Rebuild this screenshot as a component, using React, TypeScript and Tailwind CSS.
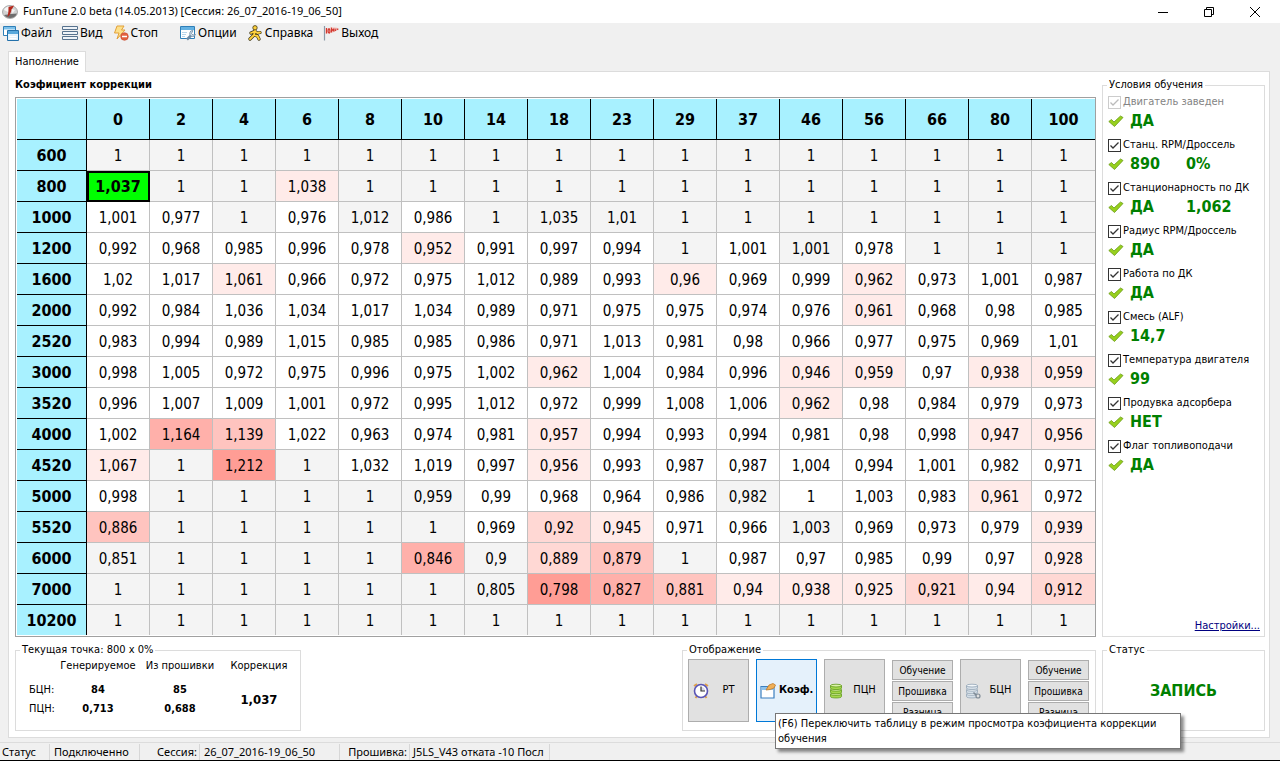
import { useState } from "react";
import type { ReactNode } from "react";

const throttle = ["0", "2", "4", "6", "8", "10", "14", "18", "23", "29", "37", "46", "56", "66", "80", "100"];

// rpm, values by throttle column, shade of every cell
const rows: [string, string, string][] = [
  ["600", "1 1 1 1 1 1 1 1 1 1 1 1 1 1 1 1", "gggggggggggggggg"],
  ["800", "1,037 1 1 1,038 1 1 1 1 1 1 1 1 1 1 1 1", "sggagggggggggggg"],
  ["1000", "1,001 0,977 1 0,976 1,012 0,986 1 1,035 1,01 1 1 1 1 1 1 1", "..g.g.gggggggggg"],
  ["1200", "0,992 0,968 0,985 0,996 0,978 0,952 0,991 0,997 0,994 1 1,001 1,001 0,978 1 1 1", ".....a...g.g.ggg"],
  ["1600", "1,02 1,017 1,061 0,966 0,972 0,975 1,012 0,989 0,993 0,96 0,969 0,999 0,962 0,973 1,001 0,987", "..a......a..a..."],
  ["2000", "0,992 0,984 1,036 1,034 1,017 1,034 0,989 0,971 0,975 0,975 0,974 0,976 0,961 0,968 0,98 0,985", "............a..."],
  ["2520", "0,983 0,994 0,989 1,015 0,985 0,985 0,986 0,971 1,013 0,981 0,98 0,966 0,977 0,975 0,969 1,01", "................"],
  ["3000", "0,998 1,005 0,972 0,975 0,996 0,975 1,002 0,962 1,004 0,984 0,996 0,946 0,959 0,97 0,938 0,959", ".......a...aa.aa"],
  ["3520", "0,996 1,007 1,009 1,001 0,972 0,995 1,012 0,972 0,999 1,008 1,006 0,962 0,98 0,984 0,979 0,973", "...........a...."],
  ["4000", "1,002 1,164 1,139 1,022 0,963 0,974 0,981 0,957 0,994 0,993 0,994 0,981 0,98 0,998 0,947 0,956", ".dc....a......aa"],
  ["4520", "1,067 1 1,212 1 1,032 1,019 0,997 0,956 0,993 0,987 0,987 1,004 0,994 1,001 0,982 0,971", "ageg...a........"],
  ["5000", "0,998 1 1 1 1 0,959 0,99 0,968 0,964 0,986 0,982 1 1,003 0,983 0,961 0,972", ".ggggg....g...a."],
  ["5520", "0,886 1 1 1 1 1 0,969 0,92 0,945 0,971 0,966 1,003 0,969 0,973 0,979 0,939", "cggggg.ba..g...a"],
  ["6000", "0,851 1 1 1 1 0,846 0,9 0,889 0,879 1 0,987 0,97 0,985 0,99 0,97 0,928", "gggggdgbcg.....a"],
  ["7000", "1 1 1 1 1 1 0,805 0,798 0,827 0,881 0,94 0,938 0,925 0,921 0,94 0,912", "gggggggedcaaabab"],
  ["10200", "1 1 1 1 1 1 1 1 1 1 1 1 1 1 1 1", "gggggggggggggggg"],
];

const shades: Record<string, string> = {
  ".": "bg-white",
  g: "bg-[#f4f4f4]",
  a: "bg-[#ffebe9]",
  b: "bg-[#ffd8d4]",
  c: "bg-[#ffc4bf]",
  d: "bg-[#ffb0aa]",
  e: "bg-[#ff9d95]",
  s: "bg-[#00ff00] text-base leading-5 font-bold outline-2 -outline-offset-2 outline-black",
};

const conditions = [
  { label: "Двигатель заведен", value: "ДА", disabled: true },
  { label: "Станц. RPM/Дроссель", value: "890", extra: "0%" },
  { label: "Станционарность по ДК", value: "ДА", extra: "1,062" },
  { label: "Радиус RPM/Дроссель", value: "ДА" },
  { label: "Работа по ДК", value: "ДА" },
  { label: "Смесь (ALF)", value: "14,7" },
  { label: "Температура двигателя", value: "99" },
  { label: "Продувка адсорбера", value: "НЕТ" },
  { label: "Флаг топливоподачи", value: "ДА" },
];

function Icon({ children }: { children: ReactNode }) {
  return (
    <svg viewBox="0 0 16 16" className="size-4 shrink-0" fill="none" aria-hidden="true">
      {children}
    </svg>
  );
}

function WindowsIcon() {
  return (
    <Icon>
      <path d="M.5 1.500h12v9H.5z" fill="#fff" stroke="#2e7fb8" />
      <path d="M1 2h11v2.500H1z" fill="#7cc0ea" />
      <path d="M4.500 5.500h11v10h-11z" fill="#e4f2fb" stroke="#2471ab" />
      <path d="M5 6h10v3H5z" fill="#58a9dc" />
      <path d="M6.500 11.500h7M6.500 13.500h7" stroke="#fff" />
    </Icon>
  );
}

function RowsIcon() {
  return (
    <Icon>
      <path d="M.5 1.500h15v3H.5zM.5 6.500h15v3H.5zM.5 11.500h15v3H.5z" fill="#eef3f8" stroke="#57728e" />
    </Icon>
  );
}

function StopIcon() {
  return (
    <Icon>
      <path d="M4 1h7L8.500 5H12L4 14l2-6H1.500z" fill="#fde08a" stroke="#e2a13a" />
      <circle cx="11.500" cy="11.500" r="3.800" fill="#e2613f" stroke="#c8472b" strokeWidth=".6" />
      <path d="M9 11.500h5" stroke="#fff" strokeWidth="1.500" />
    </Icon>
  );
}

function OptionsIcon() {
  return (
    <Icon>
      <path d="M.5 1.500h14v12H.5z" fill="#fff" stroke="#2e7fb8" />
      <path d="M1 2h13v3H1z" fill="#63b1e2" />
      <path d="M2 7.500h5M2 9.500h4M2 11.500h3" stroke="#b7d5ea" />
      <path d="M7 14.500l4.500-4.500" stroke="#6d8ba5" strokeWidth="2.500" />
      <path d="M13 5.500a3 3 0 1 0 2.500 4l-2.500.5-1.500-1.500z" fill="#cfdde8" stroke="#6d8ba5" strokeWidth=".8" />
    </Icon>
  );
}

function RunnerIcon() {
  return (
    <Icon>
      <g stroke="#3d3410" strokeLinecap="round" strokeLinejoin="round" strokeWidth="3.200">
        <path d="M8 6l-1 4 3.500 1 1.500 3M6.500 10.500L3 14M7.500 6.500L4 8M8 6.500l2.500 1.500 2.500-.5" />
      </g>
      <circle cx="8" cy="2.800" r="2.200" fill="#ffd23c" stroke="#3d3410" strokeWidth=".8" />
      <g stroke="#ffd23c" strokeLinecap="round" strokeLinejoin="round" strokeWidth="1.900">
        <path d="M8 6l-1 4 3.500 1 1.500 3M6.500 10.500L3 14M7.500 6.500L4 8M8 6.500l2.500 1.500 2.500-.5" />
      </g>
    </Icon>
  );
}

function ExitIcon() {
  return (
    <Icon>
      <path d="M1.500 1v14.500" stroke="#8b9aa8" strokeWidth="1.200" />
      <path d="M2 3.500c2-1.500 3 .5 5-.5s4-1.500 8 0c-1 3-3 4-5 4.500S4 9 2 8.500z" fill="#f3d5d2" />
      <path d="M3.500 3v5.500M6 3.500c-1.500 1.500-1 4 0 4.500s1.500-3 0-4.500M8.500 7.500V3.500l1.500 2 1-2v3M13 3.500l-.5 2.500M15 3.500L14.500 5" stroke="#d3382f" strokeWidth="1.200" />
    </Icon>
  );
}

function AppIcon() {
  return (
    <Icon>
      <ellipse cx="8" cy="8" rx="7.500" ry="6.500" fill="#d2d2d2" stroke="#9a9a9a" strokeWidth=".8" />
      <path d="M2 11c3 4.500 11 4 13-1.500L9 10z" fill="#6e6e6e" />
      <path d="M2 6a6 6 0 0 1 5-3.500L6 8z" fill="#f6f6f6" />
      <path d="M6.500 3L12 1.500 9.500 6 8 10.500 5.500 13 6.500 7z" fill="#b5281c" />
      <path d="M9.500 5l3.500 1-2.500 3.500z" fill="#f4f4f4" />
    </Icon>
  );
}

function ClockIcon() {
  return (
    <Icon>
      <path d="M1 3l3-2M15 3l-3-2M2.500 15L4 13M13.500 15L12 13" stroke="#e0a04a" strokeWidth="2" />
      <circle cx="8" cy="8" r="6.500" fill="#fff" stroke="#5a55b5" strokeWidth="1.600" />
      <path d="M8 4a4 4 0 0 1 4 4H8z" fill="#d8d8e8" />
      <path d="M8 3.500V8h4" stroke="#333" strokeWidth="1.200" />
    </Icon>
  );
}

function CardIcon() {
  return (
    <Icon>
      <path d="M1 3.500h13v11.500H1z" fill="#fff" stroke="#3a7fc0" strokeWidth="1.200" />
      <path d="M1.500 4h12v3h-12z" fill="#8cc3ee" />
      <path d="M6 7l3-5 4-1.500L15.500 2 14 5l-4 1.500z" fill="#f0b057" stroke="#c07a2a" strokeWidth=".8" />
    </Icon>
  );
}

function DatabaseIcon({ muted = false }: { muted?: boolean }) {
  const fill = muted ? "#d5dfe8" : "#a5d84b";
  const line = muted ? "#93a4b5" : "#5f9a1a";
  const light = muted ? "#f3f7fa" : "#dcf2a8";
  return (
    <Icon>
      {[10, 5.8, 1.6].map((y) => (
        <g key={y} stroke={line} strokeWidth=".8">
          <path d={`M1.500 ${y + 1}v2.600c0 1.800 11 1.800 11 0v-2.600z`} fill={fill} />
          <ellipse cx="7" cy={y + 1} rx="5.500" ry="1.400" fill={light} />
        </g>
      ))}
      {muted && (
        <>
          <path d="M8.500 9.500l4 4" stroke="#7f8b96" strokeWidth="1.600" />
          <circle cx="13" cy="13" r="2" fill="#e1e1e1" stroke="#7f8b96" strokeWidth="1.200" />
        </>
      )}
    </Icon>
  );
}

function TickIcon() {
  return (
    <Icon>
      <path d="M.8 8.500L3.500 6.500 6 9l6.500-6 2.500 1.500L6.500 13.500z" fill="#97d01d" stroke="#6a9a17" strokeWidth=".8" />
    </Icon>
  );
}

function Group({ title, className = "", children }: { title: string; className?: string; children: ReactNode }) {
  return (
    <fieldset className={`min-w-0 border border-[#dcdcdc] ${className}`}>
      <legend className="ml-1 px-[2px] leading-3">{title}</legend>
      {children}
    </fieldset>
  );
}

function Condition({ label, value, extra, disabled }: { label: string; value: string; extra?: string; disabled?: boolean }) {
  return (
    <div className="flex flex-col gap-px">
      <label className={`flex h-[14px] items-center gap-[2px] whitespace-nowrap ${disabled ? "text-[#838383]" : ""}`}>
        <span className="grid">
          <input
            type="checkbox"
            defaultChecked
            disabled={disabled}
            className="peer size-[13px] appearance-none border border-[#333] bg-white [grid-area:1/1] disabled:border-[#ccc]"
          />
          <svg
            viewBox="0 0 13 13"
            fill="none"
            className="pointer-events-none invisible size-[13px] stroke-[#333] [grid-area:1/1] peer-checked:visible peer-disabled:stroke-[#bbb]"
          >
            <path d="M2.500 6.500L5 9l5.500-5.500" strokeWidth="1.300" />
          </svg>
        </span>
        {label}
      </label>
      <div className="flex h-[22px] items-center text-base font-bold text-[#008000]">
        <TickIcon />
        <span className="ml-[6px] w-14">{value}</span>
        {extra && <span>{extra}</span>}
      </div>
    </div>
  );
}

function SmallButtons() {
  return (
    <div className="flex w-[61px] flex-col gap-px pt-px">
      {["Обучение", "Прошивка", "Разница"].map((text) => (
        <button key={text} className="h-5 border border-[#adadad] bg-[#e1e1e1] text-[10px]">
          {text}
        </button>
      ))}
    </div>
  );
}

const bigButton = "flex h-[63px] w-[61px] items-center border border-[#adadad] bg-[#e1e1e1] pl-1";

export default function App() {
  const [tooltip] = useState(true);

  return (
    <div className="flex min-h-screen flex-col bg-[#f0f0f0] font-['DejaVu_Sans_Condensed','DejaVu_Sans',sans-serif] text-[11px] text-black">
      <header className="flex h-[23px] items-center bg-white pr-[2px] pl-[2px] font-['Noto_Sans',sans-serif]">
        <AppIcon />
        <h1 className="ml-[5px] flex-1">FunTune 2.0 beta (14.05.2013) [Сессия: 26_07_2016-19_06_50]</h1>
        {[
          { name: "Свернуть", d: "M0 5.500h10" },
          { name: "Восстановить", d: "M.5 2.500h7v7h-7zM2.500 2.500v-2h7v7h-2" },
          { name: "Закрыть", d: "M0 0l10 10M10 0L0 10" },
        ].map((b) => (
          <button key={b.name} aria-label={b.name} className="flex h-full w-[46px] items-center justify-center">
            <svg viewBox="0 0 10 10" className="size-[10px]" fill="none" stroke="#000">
              <path d={b.d} />
            </svg>
          </button>
        ))}
      </header>

      <nav className="flex h-7 items-start gap-[10px] pl-[3px] font-['Noto_Sans',sans-serif] text-xs">
        <button className="flex h-5 items-center gap-[2px]"><WindowsIcon />Файл</button>
        <button className="flex h-5 items-center gap-[2px]"><RowsIcon />Вид</button>
        <button className="mr-3 flex h-5 items-center gap-[2px]"><StopIcon />Стоп</button>
        <button className="flex h-5 items-center gap-[2px]"><OptionsIcon />Опции</button>
        <button className="flex h-5 items-center gap-[2px]"><RunnerIcon />Справка</button>
        <button className="flex h-5 items-center gap-[2px]"><ExitIcon />Выход</button>
      </nav>

      <main className="mr-[10px] ml-2 flex flex-1 flex-col">
        <div role="tablist" className="flex">
          <button role="tab" aria-selected="true" className="z-10 -mb-px h-[21px] border border-b-0 border-[#dcdcdc] bg-white px-[6px]">
            Наполнение
          </button>
        </div>

        <div className="flex-1 border border-[#dcdcdc] bg-white pt-[7px] pr-1 pb-[6px] pl-[6px]">
          <div className="flex gap-[6px]">
            <section className="min-w-0 flex-1">
              <h2 className="mb-[6px] leading-3 font-bold">Коэфициент коррекции</h2>
              <div className="border border-[#a0a0a0] py-px pl-px">
                <table className="w-full table-fixed border-separate border-spacing-0 text-center text-[15px] leading-5">
                  <thead>
                    <tr className="h-[41px] bg-[#a8f1ff] text-base">
                      <th className="w-[70px] border-r border-b border-black" />
                      {throttle.map((t) => (
                        <th key={t} className="border-r border-b border-black p-0 pt-[2px] last:border-r-0">{t}</th>
                      ))}
                    </tr>
                  </thead>
                  <tbody>
                    {rows.map(([rpm, values, shade]) => (
                      <tr key={rpm} className="group h-[31px] last:h-[30px]">
                        <th className="border-r border-b border-black bg-[#a8f1ff] p-0 pt-[2px] text-base leading-5 group-last:border-b-0">{rpm}</th>
                        {values.split(" ").map((v, i) => (
                          <td
                            key={throttle[i]}
                            className={`border-r border-b border-[#c0c0c0] p-0 pt-[2px] group-last:border-b-0 last:border-r-0 ${shades[shade[i]]}`}
                          >
                            {v}
                          </td>
                        ))}
                      </tr>
                    ))}
                  </tbody>
                </table>
              </div>
            </section>

            <Group title="Условия обучения" className="flex w-[163px] flex-col">
              <div className="mt-1 ml-[5px] flex flex-col gap-[6px]">
                {conditions.map((c) => (
                  <Condition key={c.label} {...c} />
                ))}
              </div>
              <a href="#settings" className="mt-auto mr-1 mb-[2px] self-end text-[#000080] underline">
                Настройки...
              </a>
            </Group>
          </div>

          <div className="mt-[7px] flex h-[87px] gap-[6px]">
            <Group title="Текущая точка: 800 x 0%" className="w-[286px]">
              <table className="mt-[3px] ml-[13px] text-center leading-[14px]">
                <thead>
                  <tr>
                    <td className="w-6 p-0" />
                    <th className="w-[86px] p-0 font-normal">Генерируемое</th>
                    <th className="w-[78px] p-0 font-normal">Из прошивки</th>
                    <th className="w-[80px] p-0 font-normal">Коррекция</th>
                  </tr>
                </thead>
                <tbody>
                  <tr>
                    <th className="p-0 pt-[10px] text-left font-normal">БЦН:</th>
                    <td className="p-0 pt-[10px] font-bold">84</td>
                    <td className="p-0 pt-[10px] font-bold">85</td>
                    <td rowSpan={2} className="p-0 pt-[10px] text-[13px] font-bold">1,037</td>
                  </tr>
                  <tr>
                    <th className="p-0 pt-[5px] text-left font-normal">ПЦН:</th>
                    <td className="p-0 pt-[5px] font-bold">0,713</td>
                    <td className="p-0 pt-[5px] font-bold">0,688</td>
                  </tr>
                </tbody>
              </table>
            </Group>

            <Group title="Отображение" className="ml-auto">
              <div className="mt-[3px] flex gap-[7px] pr-[6px] pl-[5px]">
                <button className={bigButton}>
                  <ClockIcon />
                  <span className="flex-1">РТ</span>
                </button>
                <div className="relative">
                  <button
                    aria-describedby="coef-tip"
                    className="flex h-[63px] w-[61px] items-center gap-[3px] border border-[#0078d7] bg-[#e5f1fb] pl-[3px] font-bold"
                  >
                    <CardIcon />
                    Коэф.
                  </button>
                  {tooltip && (
                    <div
                      id="coef-tip"
                      role="tooltip"
                      className="absolute top-[54px] left-[19px] z-20 w-[406px] border border-[#767676] bg-white py-[2px] pl-[2px] leading-[15px] shadow-[3px_3px_3px_rgba(0,0,0,0.45)]"
                    >
                      (F6) Переключить таблицу в режим просмотра коэфициента коррекции обучения
                    </div>
                  )}
                </div>
                <button className={bigButton}>
                  <DatabaseIcon />
                  <span className="flex-1">ПЦН</span>
                </button>
                <SmallButtons />
                <button className={bigButton}>
                  <DatabaseIcon muted />
                  <span className="flex-1">БЦН</span>
                </button>
                <SmallButtons />
              </div>
            </Group>

            <Group title="Статус" className="w-[163px]">
              <p className="pt-[23px] text-center text-base font-bold text-[#008000]">ЗАПИСЬ</p>
            </Group>
          </div>
        </div>
      </main>

      <footer className="mt-1 flex h-[19px] items-center border-t border-b border-t-[#dcdcdc] border-b-black font-['Noto_Sans',sans-serif] whitespace-nowrap">
        <span className="w-[50px] border-r border-[#d7d7d7] pl-[2px] leading-4">Статус</span>
        <span className="w-[90px] border-r border-[#d7d7d7] pl-1 leading-4">Подключенно</span>
        <span className="w-[60px] border-r border-[#d7d7d7] pr-[2px] text-right leading-4">Сессия:</span>
        <span className="w-[140px] border-r border-[#d7d7d7] pl-1 leading-4">26_07_2016-19_06_50</span>
        <span className="w-[70px] border-r border-[#d7d7d7] pr-[2px] text-right leading-4">Прошивка:</span>
        <span className="w-[140px] border-r border-[#d7d7d7] pl-[3px] leading-4">J5LS_V43 отката -10 Посл</span>
      </footer>
    </div>
  );
}
